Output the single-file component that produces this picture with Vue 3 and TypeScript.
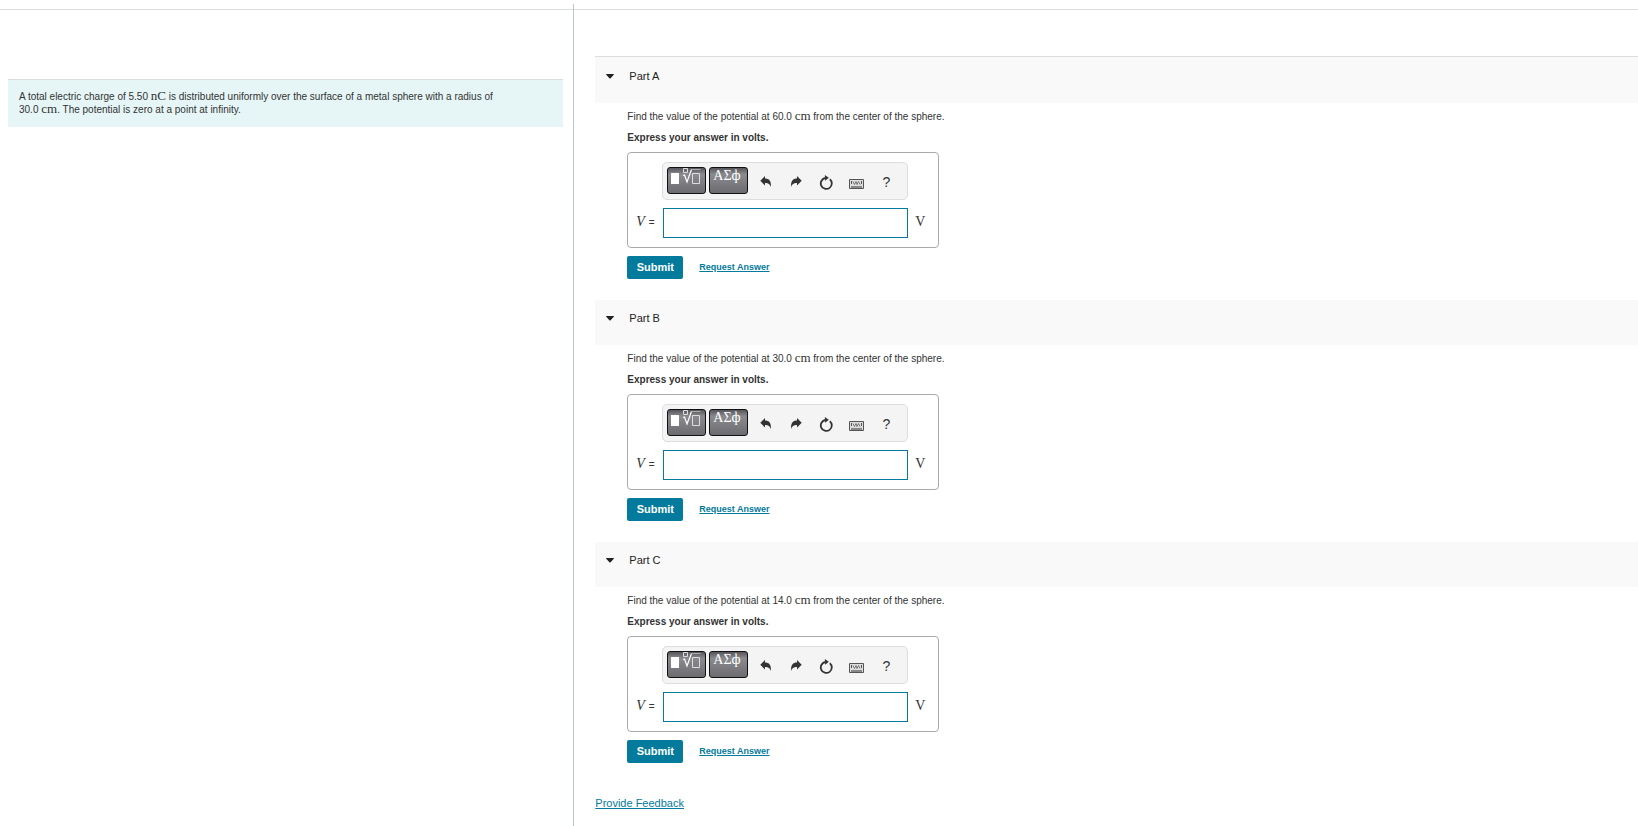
<script setup lang="ts">
import { reactive } from 'vue'

interface Part {
  id: string
  distance: string
  answer: string
  open: boolean
}

const parts = reactive<Part[]>([
  { id: 'A', distance: '60.0', answer: '', open: true },
  { id: 'B', distance: '30.0', answer: '', open: true },
  { id: 'C', distance: '14.0', answer: '', open: true },
])
</script>

<template>
  <div class="page">
    <aside class="left">
      <div class="prompt">
        A total electric charge of 5.50 <span class="unit">nC</span> is distributed uniformly over the surface of a
        metal sphere with a radius of 30.0&nbsp;<span class="unit">cm</span>. The potential is zero at a point at infinity.
      </div>
    </aside>
    <main class="right">
      <section v-for="part in parts" :key="part.id" class="part">
        <h2 class="head">
          <button type="button" class="toggle" :aria-expanded="part.open" @click="part.open = !part.open">
            <svg width="8" height="5" viewBox="0 0 8 5"><path d="M0 0.5Q0 0 .6 0H7.4Q8 0 8 .5L4.6 4.2Q4 4.8 3.4 4.2Z" fill="#222" /></svg>
            <span>Part {{ part.id }}</span>
          </button>
        </h2>
        <div v-if="part.open" class="body">
          <p class="question">
            Find the value of the potential at {{ part.distance }} <span class="unit">cm</span> from the center of the sphere.
          </p>
          <p class="express">Express your answer in volts.</p>
          <div class="answer">
            <div class="toolbar">
              <button type="button" class="palette" aria-label="Templates">
                <svg width="37" height="25" viewBox="0 0 37 25" fill="none">
                  <path d="M3 5h8v11H3z" fill="#fff" />
                  <path d="M15.500 .5h4v4h-4z" stroke="#ddd" />
                  <path d="M15 7.500l1.500-.5 2.500 7 4.500-12.500" stroke="#fff" stroke-width="1.200" />
                  <path d="M23.500 1.500H32.500" stroke="#aaa" />
                  <path d="M24.500 5.500h7v10h-7z" stroke="#ddd" />
                </svg>
              </button>
              <button type="button" class="palette symbols" aria-label="Symbols">ΑΣф</button>
              <button type="button" class="tool" aria-label="Undo">
                <svg width="12" height="12" viewBox="0 0 12 12"><path d="M5 0v2.500C9 2.500 11.500 5 10.800 11 9.800 8 8.500 7 5 7v2.500L.3 4.700z" fill="#333" /></svg>
              </button>
              <button type="button" class="tool" aria-label="Redo">
                <svg width="12" height="12" viewBox="0 0 12 12"><path d="M7 0v2.500C3 2.500 .5 5 1.200 11 2.200 8 3.500 7 7 7v2.500L11.700 4.700z" fill="#333" /></svg>
              </button>
              <button type="button" class="tool" aria-label="Reset">
                <svg width="14" height="15" viewBox="0 0 14 15"><path d="M10.800 4.200A5.500 5.500 0 1 1 6.500 3" fill="none" stroke="#333" stroke-width="1.800" /><path d="M5.800 0L9.800 2.800 6.200 5.800z" fill="#333" /></svg>
              </button>
              <button type="button" class="tool keys" aria-label="Keyboard shortcuts">
                <svg width="15" height="10" viewBox="0 0 15 10">
                  <path d="M.5.5h14v9H.5z" fill="#ddd" stroke="#555" />
                  <path d="M2 8h11" stroke="#888" stroke-width="2" />
                  <path d="M2.500 2v3M12.500 2v3" stroke="#555" />
                  <path d="M4 2.500l1.500 3L7 2.500l1 3 1.500-3 1.500 3" fill="none" stroke="#777" />
                </svg>
              </button>
              <button type="button" class="tool help" aria-label="Help">?</button>
            </div>
            <div class="entry">
              <label :for="'answer-' + part.id"><i>V</i> =</label>
              <input :id="'answer-' + part.id" v-model="part.answer" type="text" />
              <span class="volt">V</span>
            </div>
          </div>
          <div class="actions">
            <button type="button" class="submit">Submit</button>
            <a href="#">Request Answer</a>
          </div>
        </div>
      </section>
      <a class="feedback" href="#">Provide Feedback</a>
    </main>
  </div>
</template>

<style>
body {
  margin: 0;
  background: #fff;
}
</style>

<style scoped>
* {
  box-sizing: border-box;
}

.page {
  display: grid;
  grid-template-columns: 35% 1fr;
  min-height: 100vh;
  padding-top: 4px;
  background: linear-gradient(#dcdfe1, #dcdfe1) 0 9px / 100% 1px no-repeat;
  font-family: 'Liberation Sans', Arial, sans-serif;
  font-size: 10px;
  color: #333;
}

.left {
  padding: 75px 10px 0 8px;
}

.prompt {
  padding: 10px 30px 11px 11px;
  border-top: 1px solid #d9dfde;
  background: #e6f6f6;
  line-height: 13px;
}

.unit {
  font-family: 'Liberation Serif', 'Times New Roman', serif;
  font-size: 13px;
  line-height: 1px;
}

.right {
  padding: 52px 0 16px 21px;
  border-left: 1px solid #bcc5cf;
}

.part {
  padding-bottom: 21px;
}

.head {
  height: 45px;
  margin: 0;
  background: #f9f9f9;
}

.part:first-child .head {
  height: 47px;
  padding-top: 1px;
  border-top: 1px solid #dcdcdc;
}

.toggle {
  display: flex;
  align-items: center;
  gap: 15px;
  width: 100%;
  padding: 11px;
  border: 0;
  background: none;
  font: 11px/14px 'Liberation Sans', Arial, sans-serif;
  color: #222;
}

.body {
  padding-left: 32px;
}

p {
  margin: 0;
  line-height: 14px;
}

.question {
  padding-top: 7px;
}

.express {
  padding: 7px 0;
  font-weight: bold;
}

.answer {
  width: 312px;
  height: 96px;
  padding: 9px 0 0 8px;
  border: 1px solid #aaa;
  border-radius: 4px;
}

.toolbar {
  display: flex;
  align-items: flex-start;
  width: 246px;
  height: 38px;
  margin-left: 26px;
  padding: 4px;
  border: 1px solid #ddd;
  border-radius: 5px;
  background: #f4f4f4;
}

.palette {
  width: 39px;
  height: 27px;
  margin-right: 3px;
  padding: 0;
  border: 1px solid #111;
  border-radius: 3px;
  background: linear-gradient(#55555b, #8a8a8f 25%, #6c6c70);
  color: #fff;
}

.palette svg {
  display: block;
}

.symbols {
  padding: 0 0 9px 3px;
  font: 14px/16px 'Liberation Serif', 'Times New Roman', serif;
  text-align: left;
}

.tool {
  display: flex;
  align-items: center;
  justify-content: center;
  width: 30px;
  height: 30px;
  padding: 0;
  border: 0;
  background: none;
  color: #333;
}

.keys {
  padding-top: 3px;
}

.help {
  font: 14px/16px 'Liberation Sans', Arial, sans-serif;
}

.entry {
  display: flex;
  align-items: center;
  margin-top: 8px;
}

label {
  width: 27px;
  padding-bottom: 3px;
}

label i,
.volt {
  font-family: 'Liberation Serif', 'Times New Roman', serif;
  font-size: 14px;
}

label i {
  margin-right: 1px;
}

.entry input {
  width: 245px;
  height: 30px;
  padding: 0 6px;
  border: 1px solid #047a9c;
  border-radius: 0;
  background: #fff;
}

.volt {
  margin-left: 7px;
  padding-bottom: 3px;
}

.actions {
  display: flex;
  align-items: center;
  gap: 16px;
  margin-top: 8px;
}

.submit {
  width: 56px;
  height: 23px;
  padding: 0;
  border: 0;
  border-radius: 2px;
  background: #047a9c;
  color: #fff;
  font: bold 11px/23px 'Liberation Sans', Arial, sans-serif;
}

a {
  color: #047a9c;
}

.actions a {
  padding-bottom: 2px;
  font-size: 9px;
  font-weight: bold;
}

.feedback {
  display: inline-block;
  margin-top: 12px;
  font-size: 11px;
  line-height: 14px;
}
</style>
